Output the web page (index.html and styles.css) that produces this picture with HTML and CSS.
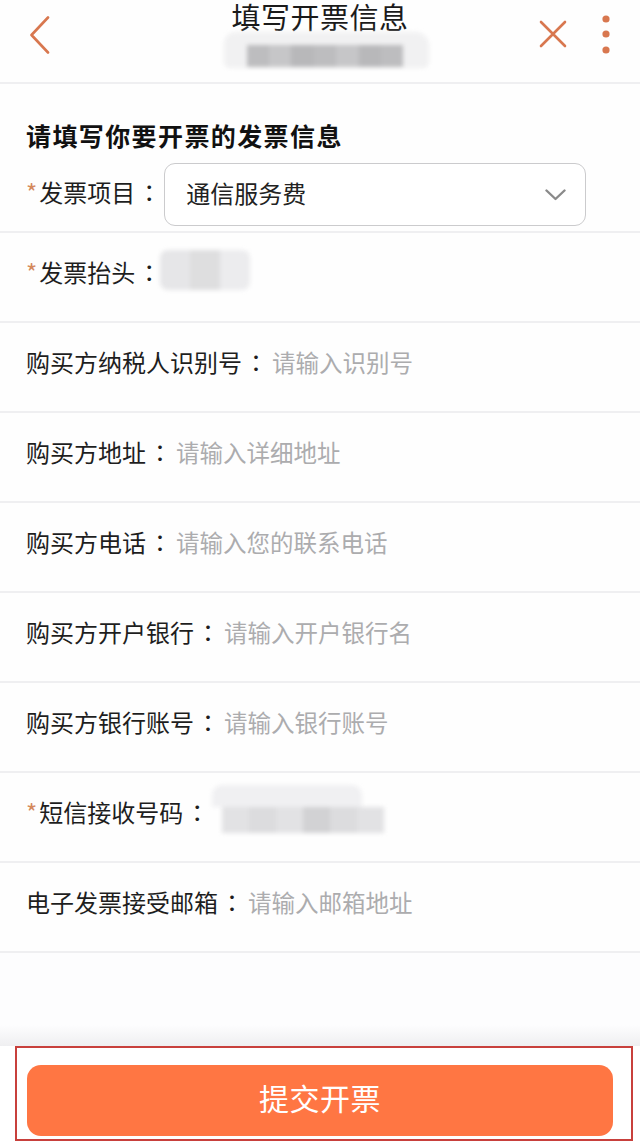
FILE: index.html
```html
<!DOCTYPE html>
<html lang="zh-CN">
<head>
<meta charset="utf-8">
<title>填写开票信息</title>
<link rel="stylesheet" href="styles.css">
</head>
<body>
<div class="page">
  <header class="topbar">
    <div class="nav-left">
      <svg class="icon-back" width="22" height="38" viewBox="0 0 22 38"><path d="M19 1.5 L2.5 19 L19 36.5" fill="none" stroke="#d8774f" stroke-width="2.6" stroke-linecap="round" stroke-linejoin="round"/></svg>
    </div>
    <div class="nav-center">
      <div class="nav-title">填写开票信息</div>
      <div class="blur blur-sub">
        <div class="blur-bg"></div>
        <div class="blur-blocks">
          <span class="b1"></span><span class="b2"></span><span class="b3"></span><span class="b1"></span><span class="b2"></span><span class="b3"></span><span class="b1"></span>
        </div>
      </div>
    </div>
    <div class="nav-right">
      <svg class="icon-close" width="28" height="28" viewBox="0 0 28 28"><path d="M2 2 L26 26 M26 2 L2 26" fill="none" stroke="#d8774f" stroke-width="2.6" stroke-linecap="round"/></svg>
      <svg class="icon-more" width="8" height="40" viewBox="0 0 8 40"><circle cx="4" cy="4" r="3.6" fill="#d8774f"/><circle cx="4" cy="19" r="3.6" fill="#d8774f"/><circle cx="4" cy="35" r="3.6" fill="#d8774f"/></svg>
    </div>
  </header>

  <main class="form">
    <section class="intro">
      <h1 class="intro-title">请填写你要开票的发票信息</h1>
      <div class="intro-field">
        <span class="label"><span class="req">*</span>发票项目<span class="colon">：</span></span>
        <div class="select">
          <span class="select-value">通信服务费</span>
          <svg class="select-arrow" width="21" height="12" viewBox="0 0 21 12"><path d="M1.5 1.5 L10.5 10 L19.5 1.5" fill="none" stroke="#8a8a8a" stroke-width="2.4" stroke-linecap="round" stroke-linejoin="round"/></svg>
        </div>
      </div>
    </section>

    <div class="row">
      <span class="label"><span class="req">*</span>发票抬头<span class="colon">：</span></span>
      <div class="blur blur-title">
        <span class="t1"></span><span class="t2"></span><span class="t3"></span>
      </div>
    </div>
    <div class="row">
      <span class="label">购买方纳税人识别号<span class="colon">：</span></span><span class="placeholder">请输入识别号</span>
    </div>
    <div class="row">
      <span class="label">购买方地址<span class="colon">：</span></span><span class="placeholder">请输入详细地址</span>
    </div>
    <div class="row">
      <span class="label">购买方电话<span class="colon">：</span></span><span class="placeholder">请输入您的联系电话</span>
    </div>
    <div class="row">
      <span class="label">购买方开户银行<span class="colon">：</span></span><span class="placeholder">请输入开户银行名</span>
    </div>
    <div class="row">
      <span class="label">购买方银行账号<span class="colon">：</span></span><span class="placeholder">请输入银行账号</span>
    </div>
    <div class="row">
      <span class="label"><span class="req">*</span>短信接收号码<span class="colon">：</span></span>
      <div class="blur blur-phone">
        <div class="blur-phone-top"></div>
        <div class="blur-phone-blocks">
          <span class="p1"></span><span class="p2"></span><span class="p1"></span><span class="p3"></span><span class="p2"></span><span class="p1"></span>
        </div>
      </div>
    </div>
    <div class="row">
      <span class="label">电子发票接受邮箱<span class="colon">：</span></span><span class="placeholder">请输入邮箱地址</span>
    </div>
  </main>

  <div class="spacer"></div>

  <footer class="footer">
    <div class="footer-box">
      <button class="submit" type="button">提交开票</button>
    </div>
  </footer>
</div>
</body>
</html>
```

FILE: styles.css
```css
* { box-sizing: border-box; }

html, body {
  margin: 0;
  padding: 0;
}

body {
  width: 640px;
  height: 1147px;
  overflow: hidden;
  background: #fdfdfe;
  font-family: "Noto Sans CJK SC", "Noto Sans", "Liberation Sans", sans-serif;
  color: #1e1e1e;
}

.page {
  display: flex;
  flex-direction: column;
  height: 1147px;
}

/* ---------- top bar ---------- */
.topbar {
  height: 84px;
  flex: none;
  display: grid;
  grid-template-columns: 1fr auto 1fr;
  border-bottom: 2px solid #efeff1;
  background: #fefefe;
}

.nav-left {
  padding: 16px 0 0 29px;
}

.icon-back { display: block; }

.nav-center {
  display: flex;
  flex-direction: column;
  align-items: center;
  padding-top: 2px;
}

.nav-title {
  font-size: 29px;
  line-height: 29px;
  color: #1a1a1a;
  letter-spacing: 0.5px;
}

.nav-right {
  display: flex;
  justify-content: flex-end;
  align-items: flex-start;
  padding: 15px 30px 0 0;
  gap: 35px;
}

.icon-close { display: block; margin-top: 5px; }
.icon-more { display: block; }

/* ---------- blurred (redacted) content ---------- */
.blur { filter: blur(2px); }

.blur-sub {
  position: relative;
  width: 205px;
  height: 36px;
  margin-top: 1px;
  margin-left: 12px;
}

.blur-bg {
  position: absolute;
  inset: 0;
  background: #ececee;
  border-radius: 12px 14px 6px 6px;
  opacity: 0.75;
}

.blur-blocks {
  position: absolute;
  left: 23px;
  right: 25px;
  top: 13px;
  bottom: 1px;
  display: flex;
}

.blur-blocks span { flex: 1; }
.b1 { background: #bdbdbf; }
.b2 { background: #c6c6c8; }
.b3 { background: #b8b8ba; }

.blur-title {
  display: flex;
  width: 90px;
  height: 40px;
  margin-top: -4px;
  margin-left: -3px;
  border-radius: 8px;
  overflow: hidden;
}
.blur-title span { flex: 1; }
.t1 { background: #e6e6e8; }
.t2 { background: #dededf; }
.t3 { background: #ececee; }

.blur-phone {
  width: 172px;
  height: 48px;
  margin-top: -6px;
  margin-left: 1px;
  display: flex;
  flex-direction: column;
}
.blur-phone-top {
  height: 22px;
  width: 150px;
  background: #f0f0f2;
  border-radius: 10px 10px 0 0;
}
.blur-phone-blocks {
  flex: 1;
  display: flex;
  margin-left: 10px;
}
.blur-phone-blocks span { flex: 1; }
.p1 { background: #e2e2e4; }
.p2 { background: #dcdcde; }
.p3 { background: #d2d2d4; }

/* ---------- form ---------- */
.form {
  flex: none;
  background: #fefefe;
}

.intro {
  height: 149px;
  padding: 35px 0 0 26px;
  border-bottom: 2px solid #efeff1;
}

.intro-title {
  margin: 0;
  font-size: 25px;
  line-height: 32px;
  font-weight: 700;
  letter-spacing: 1.4px;
  color: #111;
}

.intro-field {
  display: flex;
  align-items: center;
  margin-top: 12px;
}

.label {
  font-size: 24px;
  line-height: 32px;
  color: #1e1e1e;
  white-space: nowrap;
}

.colon {
  font-family: "Noto Sans CJK TC", "Noto Sans CJK SC", sans-serif;
  display: inline-block;
  width: 28px;
  text-align: center;
}

.req {
  color: #d4895c;
  margin-right: 2px;
}

.intro-field .label {
  margin-right: 1px;
  margin-bottom: 5px;
}

.select {
  width: 422px;
  height: 63px;
  border: 1.5px solid #cbcbcd;
  border-radius: 11px;
  display: flex;
  align-items: center;
  justify-content: space-between;
  padding: 0 19px 0 21px;
  background: #fff;
}

.select-value {
  font-size: 24px;
  line-height: 32px;
  color: #222;
  margin-bottom: 4px;
}

.select-arrow { display: block; }

.row {
  height: 90px;
  display: flex;
  align-items: center;
  padding: 0 0 10px 26px;
  border-bottom: 2px solid #efeff1;
}

.placeholder {
  font-size: 23.5px;
  line-height: 32px;
  color: #acacae;
  white-space: nowrap;
  margin-left: 2px;
}

/* ---------- bottom ---------- */
.spacer {
  flex: 1;
  background: linear-gradient(to bottom, #fdfdfe 0, #fdfdfe 72px, #efeff1 100%);
}

.footer {
  flex: none;
  background: #fff;
  padding: 0 0 6px 15px;
}

.footer-box {
  width: 618px;
  height: 95px;
  border: 2px solid #c8403c;
  padding: 17px 18px 0 10px;
  background: #fff;
}

.submit {
  display: block;
  width: 100%;
  height: 71px;
  border: none;
  border-radius: 14px;
  background: #ff7643;
  color: #fff;
  font-family: "Noto Sans CJK SC", "Noto Sans", sans-serif;
  font-size: 30px;
  line-height: 36px;
  letter-spacing: 0.5px;
  padding: 0 0 8px;
}
```
